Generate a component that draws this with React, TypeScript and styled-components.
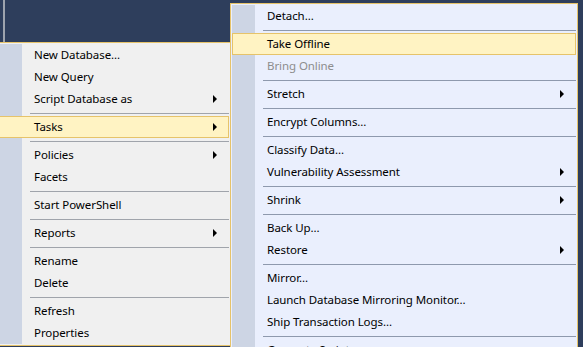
import React from 'react';
import styled, { createGlobalStyle } from 'styled-components';

type Entry =
  | { kind: 'item'; label: string; submenu?: boolean; active?: boolean; disabled?: boolean }
  | { kind: 'sep' };

const item = (label: string, opts: Partial<{ submenu: boolean; active: boolean; disabled: boolean }> = {}): Entry => ({
  kind: 'item',
  label,
  ...opts,
});
const sep: Entry = { kind: 'sep' };

const databaseMenu: Entry[] = [
  item('New Database...'),
  item('New Query'),
  item('Script Database as', { submenu: true }),
  sep,
  item('Tasks', { submenu: true, active: true }),
  sep,
  item('Policies', { submenu: true }),
  item('Facets'),
  sep,
  item('Start PowerShell'),
  sep,
  item('Reports', { submenu: true }),
  sep,
  item('Rename'),
  item('Delete'),
  sep,
  item('Refresh'),
  item('Properties'),
];

const tasksMenu: Entry[] = [
  item('Detach...'),
  sep,
  item('Take Offline', { active: true }),
  item('Bring Online', { disabled: true }),
  sep,
  item('Stretch', { submenu: true }),
  sep,
  item('Encrypt Columns...'),
  sep,
  item('Classify Data...'),
  item('Vulnerability Assessment', { submenu: true }),
  sep,
  item('Shrink', { submenu: true }),
  sep,
  item('Back Up...'),
  item('Restore', { submenu: true }),
  sep,
  item('Mirror...'),
  item('Launch Database Mirroring Monitor...'),
  item('Ship Transaction Logs...'),
  sep,
  item('Generate Scripts...'),
  item('Generate In-Memory OLTP Migration Checklists'),
];

const NAVY = '#2e3e5c';
const GOLD = '#e6c36a';

const GlobalStyle = createGlobalStyle`
  html, body {
    margin: 0;
    padding: 0;
  }
  body {
    width: 583px;
    height: 347px;
    overflow: hidden;
    background:
      linear-gradient(to right, transparent 3px, #9ea4ae 3px, #9ea4ae 5px, transparent 5px) no-repeat 0 0 / 100% 42px,
      ${NAVY};
    font-family: "Segoe UI", "Noto Sans", "Liberation Sans", sans-serif;
    font-size: 11.5px;
    letter-spacing: -0.08px;
    color: #000;
  }
`;

const Stage = styled.div`
  display: flex;
  align-items: flex-start;
  width: 583px;
  height: 347px;
  overflow: hidden;
`;

const Menu = styled.div<{ $tone: 'grey' | 'blue' }>`
  flex: none;
  box-sizing: border-box;
  border: 1px solid ${GOLD};
  padding: 1px;
  background: ${(p) => (p.$tone === 'grey' ? '#f0f0f0' : '#eaeffd')};
`;

const ObjectMenu = styled(Menu)`
  width: 234px;
  margin: 42px 0 0 -3px;
`;

const TasksMenu = styled(Menu)`
  position: relative;
  z-index: 1;
  width: 348px;
  margin: 3px 0 0 -1px;
`;

const List = styled.div`
  display: flex;
  flex-direction: column;
  background: linear-gradient(to right, #cdd5e4 0, #cdd5e4 23px, transparent 23px);
`;

const Row = styled.div<{ $active?: boolean; $disabled?: boolean }>`
  box-sizing: border-box;
  height: 22px;
  display: flex;
  align-items: center;
  justify-content: space-between;
  padding: 0 10px 0 34px;
  border: 1px solid ${(p) => (p.$active ? GOLD : 'transparent')};
  background: ${(p) => (p.$active ? '#fff3c3' : 'transparent')};
  color: ${(p) => (p.$disabled ? '#8d8d8d' : '#000')};
  white-space: nowrap;
`;

const Label = styled.span`
  line-height: 20px;
`;

const Arrow = styled.span`
  width: 0;
  height: 0;
  border-left: 4px solid #000;
  border-top: 4px solid transparent;
  border-bottom: 4px solid transparent;
  margin-right: 1px;
`;

const Separator = styled.div<{ $tone: 'grey' | 'blue' }>`
  height: 6px;
  display: flex;
  align-items: center;
  padding-left: 31px;

  &::after {
    content: '';
    flex: 1;
    height: 1px;
    background: ${(p) => (p.$tone === 'grey' ? '#a0a4ab' : '#8e99ad')};
  }
`;

function MenuEntries({ entries, tone }: { entries: Entry[]; tone: 'grey' | 'blue' }) {
  return (
    <List>
      {entries.map((e, i) =>
        e.kind === 'sep' ? (
          <Separator key={i} $tone={tone} />
        ) : (
          <Row key={i} $active={e.active} $disabled={e.disabled}>
            <Label>{e.label}</Label>
            {e.submenu && <Arrow />}
          </Row>
        ),
      )}
    </List>
  );
}

export default function App() {
  return (
    <>
      <GlobalStyle />
      <Stage>
        <ObjectMenu $tone="grey">
          <MenuEntries entries={databaseMenu} tone="grey" />
        </ObjectMenu>
        <TasksMenu $tone="blue">
          <MenuEntries entries={tasksMenu} tone="blue" />
        </TasksMenu>
      </Stage>
    </>
  );
}
